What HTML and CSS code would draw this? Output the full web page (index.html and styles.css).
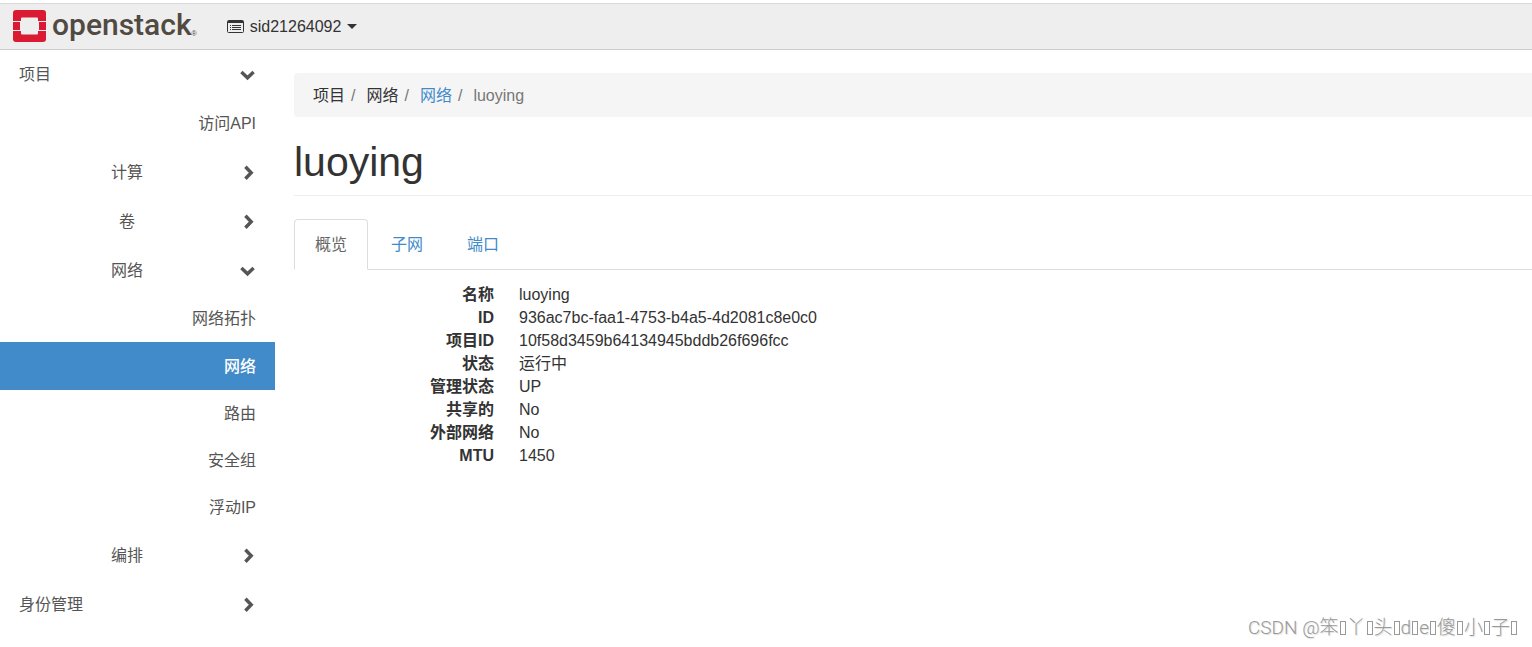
FILE: index.html
```html
<!DOCTYPE html>
<html lang="zh-CN">
<head>
<meta charset="utf-8">
<title>luoying - OpenStack Dashboard</title>
<link rel="stylesheet" href="styles.css">
</head>
<body>
<svg class="sprite" aria-hidden="true">
  <symbol id="down" viewBox="0 0 16 16"><path d="M1.400 5 7.500 10.800l6.100-5.800" fill="none" stroke="currentColor" stroke-width="3.400"/></symbol>
  <symbol id="right" viewBox="0 0 16 16"><path d="M5.400 1.800 11.200 7.800l-5.800 6" fill="none" stroke="currentColor" stroke-width="3.400"/></symbol>
</svg>
<header class="topbar">
  <a class="brand" href="#" aria-label="openstack">
    <svg class="brand-mark" viewBox="0 0 33 32" aria-hidden="true">
      <path fill="#da1a32" d="M3 0h27a3 3 0 0 1 3 3v8h-8V8.500a1 1 0 0 0-1-1H9a1 1 0 0 0-1 1V11H0V3a3 3 0 0 1 3-3zM0 12h7v8H0zM26 12h7v8h-7zM0 21h8v2.500a1 1 0 0 0 1 1h15a1 1 0 0 0 1-1V21h8v8a3 3 0 0 1-3 3H3a3 3 0 0 1-3-3z"/>
    </svg>
    <span class="brand-name">openstack</span><span class="brand-reg">®</span>
  </a>
  <button class="project" type="button">
    <svg class="project-icon" viewBox="0 0 17 14" aria-hidden="true">
      <rect x=".5" y=".5" width="16" height="12" rx="1" fill="none" stroke="currentColor"/>
      <path fill="currentColor" d="M1 1h15v2H1zM3 5h1v1H3zM5 5h9v1H5zM3 7h1v1H3zM5 7h9v1H5zM3 9h1v1H3zM5 9h9v1H5z"/>
    </svg>
    <span>sid21264092</span>
    <span class="caret"></span>
  </button>
</header>
<div class="layout">
  <nav class="sidebar">
    <a class="item" href="#"><span>项目</span><svg class="chev"><use href="#down"/></svg></a>
    <a class="item end" href="#">访问API</a>
    <a class="item group" href="#"><span>计算</span><svg class="chev"><use href="#right"/></svg></a>
    <a class="item group" href="#"><span>卷</span><svg class="chev"><use href="#right"/></svg></a>
    <a class="item group" href="#"><span>网络</span><svg class="chev"><use href="#down"/></svg></a>
    <a class="item panel" href="#">网络拓扑</a>
    <a class="item panel active" href="#" aria-current="page">网络</a>
    <a class="item panel" href="#">路由</a>
    <a class="item panel" href="#">安全组</a>
    <a class="item panel" href="#">浮动IP</a>
    <a class="item group" href="#"><span>编排</span><svg class="chev"><use href="#right"/></svg></a>
    <a class="item" href="#"><span>身份管理</span><svg class="chev"><use href="#right"/></svg></a>
  </nav>
  <main class="content">
    <ol class="breadcrumb">
      <li>项目</li>
      <li>网络</li>
      <li><a href="#">网络</a></li>
      <li class="current">luoying</li>
    </ol>
    <h1 class="title">luoying</h1>
    <div class="tabs" role="tablist">
      <a class="tab selected" role="tab" aria-selected="true" href="#">概览</a>
      <a class="tab" role="tab" href="#">子网</a>
      <a class="tab" role="tab" href="#">端口</a>
    </div>
    <dl class="details">
      <dt>名称</dt><dd>luoying</dd>
      <dt>ID</dt><dd>936ac7bc-faa1-4753-b4a5-4d2081c8e0c0</dd>
      <dt>项目ID</dt><dd>10f58d3459b64134945bddb26f696fcc</dd>
      <dt>状态</dt><dd>运行中</dd>
      <dt>管理状态</dt><dd>UP</dd>
      <dt>共享的</dt><dd>No</dd>
      <dt>外部网络</dt><dd>No</dd>
      <dt>MTU</dt><dd>1450</dd>
    </dl>
  </main>
</div>
<div class="watermark">CSDN @笨<i></i>丫<i></i>头<i></i>d<i></i>e<i></i>傻<i></i>小<i></i>子<i></i></div>
</body>
</html>
```
FILE: styles.css
```css
* { box-sizing: border-box; }
body {
  margin: 0;
  padding-top: 3px;
  background: #fff;
  color: #333;
  font: 16px/23px "Liberation Sans", "Noto Sans CJK SC", sans-serif;
}
a { color: #428bca; text-decoration: none; }
.sprite { display: none; }

.topbar {
  display: flex;
  align-items: center;
  height: 47px;
  padding-left: 13px;
  background: #eee;
  border-top: 1px solid #d8d8d8;
  border-bottom: 1px solid #ccc;
}
.brand { display: flex; align-items: center; padding-bottom: 2px; color: #514a42; }
.brand-mark { width: 33px; height: 32px; margin-right: 6px; }
.brand-name { font: 500 30px/32px Roboto, sans-serif; padding-bottom: 2px; }
.brand-reg { align-self: flex-end; font-size: 7px; line-height: 18px; }
.project {
  display: flex;
  align-items: center;
  gap: 6px;
  margin-left: 30px;
  padding: 0;
  border: 0;
  background: none;
  color: #333;
  font: inherit;
}
.project-icon { width: 17px; height: 14px; }
.caret { border: 5px solid transparent; border-top-color: #333; border-bottom: 0; }

.layout { display: flex; }
.sidebar { flex: 0 0 275px; }
.item {
  display: flex;
  align-items: center;
  justify-content: space-between;
  height: 49px;
  padding: 0 19px;
  color: #555;
}
.chev { width: 16px; height: 16px; }
.end, .panel { justify-content: flex-end; }
.panel { height: 47px; }
.active { height: 48px; background: #428bca; color: #fff; font-weight: 500; }
.group { display: grid; grid-template-columns: 1fr 16px; padding-left: 0; }
.group span { text-align: center; padding-left: 14px; }

.content { flex: 1; min-width: 0; padding: 23px 0 0 19px; }
.breadcrumb {
  display: flex;
  margin: 0 0 23px;
  padding: 11px 19px 10px;
  list-style: none;
  background: #f5f5f5;
  border-radius: 4px 0 0 4px;
}
.breadcrumb li + li::before { content: "/"; padding: 0 11px 0 6px; color: #777; }
.breadcrumb .current { color: #777; }
.title {
  margin: 0 0 23px;
  padding-bottom: 10px;
  border-bottom: 1px solid #eee;
  font-size: 41px;
  font-weight: 400;
  line-height: 45px;
}
.tabs { display: flex; gap: 2px; border-bottom: 1px solid #ddd; }
.tab {
  padding: 13px 20px;
  margin-bottom: -1px;
  border: 1px solid transparent;
  border-radius: 4px 4px 0 0;
  line-height: 23px;
}
.selected { color: #666; background: #fff; border-color: #ddd; border-bottom-color: #fff; }
.details {
  display: grid;
  grid-template-columns: 200px 1fr;
  column-gap: 25px;
  margin: 13px 0 0;
}
.details dt { font-weight: 700; text-align: right; }
.details dd { margin: 0; }

.watermark {
  position: absolute;
  right: 14px;
  bottom: 6px;
  color: #999;
  font: 300 19px/26px Roboto, "Noto Sans CJK SC", sans-serif;
  text-shadow: 1px 1px 1px #ddd;
}
.watermark i {
  display: inline-block;
  width: 6px;
  height: 14px;
  margin: 0 1px;
  border: 1px solid #999;
  vertical-align: -1px;
}
```
